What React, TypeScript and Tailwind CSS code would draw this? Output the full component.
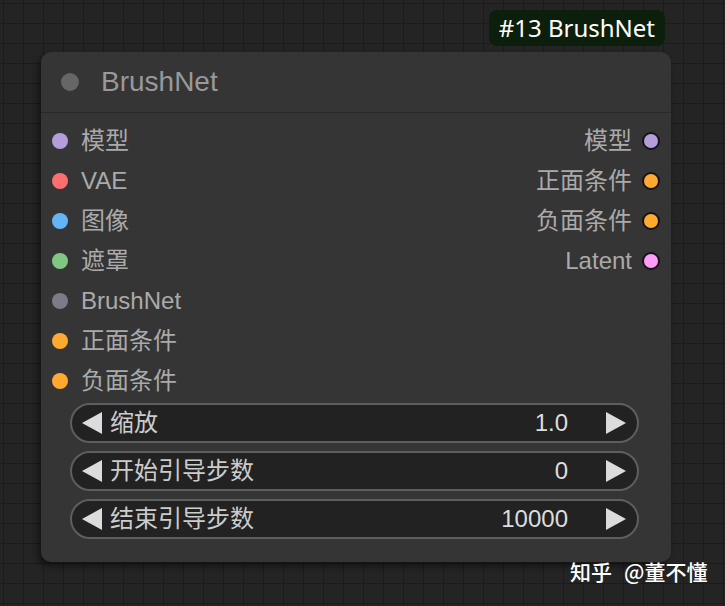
import React from "react";

const inputs = [
  { label: "模型", color: "#b39ddb" },
  { label: "VAE", color: "#ff6e6e" },
  { label: "图像", color: "#64b5f6" },
  { label: "遮罩", color: "#81c784" },
  { label: "BrushNet", color: "#7b7b8a" },
  { label: "正面条件", color: "#ffa931" },
  { label: "负面条件", color: "#ffa931" },
];

const outputs = [
  { label: "模型", color: "#b39ddb" },
  { label: "正面条件", color: "#ffa931" },
  { label: "负面条件", color: "#ffa931" },
  { label: "Latent", color: "#ff9cf9" },
];

const widgets = [
  { label: "缩放", value: "1.0" },
  { label: "开始引导步数", value: "0" },
  { label: "结束引导步数", value: "10000" },
];

const font = "font-['Liberation_Sans','Noto_Sans_CJK_SC',sans-serif]";

function Tri({ dir }: { dir: "l" | "r" }) {
  return (
    <svg width="20" height="22" viewBox="0 0 20 22" className="shrink-0">
      {dir === "l" ? (
        <polygon points="20,0 20,22 0,11" fill="#dcdcdc" />
      ) : (
        <polygon points="0,0 0,22 20,11" fill="#dcdcdc" />
      )}
    </svg>
  );
}

export default function App() {
  return (
    <div
      className={`relative w-[725px] h-[606px] overflow-hidden bg-[#242424] ${font} bg-[linear-gradient(to_right,#1b1b1b_1px,transparent_1px),linear-gradient(to_bottom,#1b1b1b_1px,transparent_1px)] bg-[size:20px_20px] bg-[position:3px_3px] pt-[52px] pl-[41px]`}
    >
      <div className="relative w-[630px] h-[510px] rounded-[10px] bg-[#353535] shadow-[-3px_4px_6px_rgba(0,0,0,0.45)]">
        <div className="absolute right-[6px] top-[-42px] h-[36px] px-[10px] rounded-[8px] bg-[#0c1f0c] flex items-center text-white text-[24px] font-['Noto_Sans',sans-serif] leading-none">
          #13 BrushNet
        </div>
        <div className="h-[61px] flex items-center pl-[20px] border-b border-[#292929]">
          <div className="w-[18px] h-[18px] rounded-full bg-[#666666]" />
          <div className="ml-[22px] text-[28px] text-[#999999] leading-none">BrushNet</div>
        </div>
        <div className="pt-[8px] flex justify-between">
          <div className="flex flex-col">
            {inputs.map((s) => (
              <div key={s.label + s.color} className="h-[40px] flex items-center pl-[11px]">
                <div className="w-[16px] h-[16px] rounded-full" style={{ backgroundColor: s.color }} />
                <div className="ml-[13px] text-[24px] text-[#aaaaaa] leading-none">{s.label}</div>
              </div>
            ))}
          </div>
          <div className="flex flex-col">
            {outputs.map((s) => (
              <div key={s.label + s.color} className="h-[40px] flex items-center justify-end pr-[11px]">
                <div className="text-[24px] text-[#aaaaaa] leading-none">{s.label}</div>
                <div
                  className="ml-[10px] w-[18px] h-[18px] rounded-full border-2 border-[#151515]"
                  style={{ backgroundColor: s.color }}
                />
              </div>
            ))}
          </div>
        </div>
        <div className="mt-[2px] flex flex-col gap-[8px] pl-[29px]">
          {widgets.map((w) => (
            <div
              key={w.label}
              className="w-[569px] h-[40px] rounded-full bg-[#222222] border-2 border-[#5e5e5e] flex items-center pl-[10px] pr-[11px]"
            >
              <Tri dir="l" />
              <div className="ml-[8px] text-[24px] text-[#cccccc] leading-none">{w.label}</div>
              <div className="ml-auto text-[24px] text-[#dddddd] leading-none">{w.value}</div>
              <div className="ml-[38px]">
                <Tri dir="r" />
              </div>
            </div>
          ))}
        </div>
      </div>
      <div className="absolute left-[570px] top-[561px] flex gap-[12px] text-[21px] text-white font-medium font-['Noto_Sans_CJK_SC',sans-serif] leading-none">
        <span>知乎</span>
        <span>@董不懂</span>
      </div>
    </div>
  );
}
